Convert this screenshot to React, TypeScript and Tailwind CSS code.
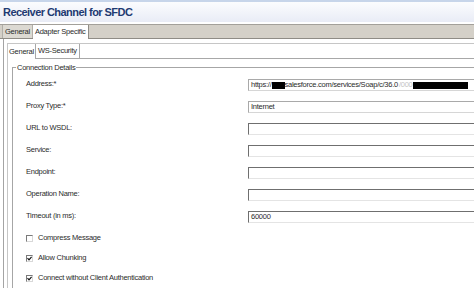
import React from "react";

const fields = [
  { label: "Address:*", kind: "address" },
  { label: "Proxy Type:*", kind: "value", value: "Internet" },
  { label: "URL to WSDL:", kind: "empty" },
  { label: "Service:", kind: "empty" },
  { label: "Endpoint:", kind: "empty" },
  { label: "Operation Name:", kind: "empty" },
  { label: "Timeout (in ms):", kind: "timeout", value: "60000" },
];

const checks = [
  { label: "Compress Message", on: false },
  { label: "Allow Chunking", on: true },
  { label: "Connect without Client Authentication", on: true },
];

function Input({ kind, value }: { kind: string; value?: string }) {
  const light = kind === "address" || kind === "value";
  return (
    <div
      className={
        "h-[12px] flex-1 flex items-center pl-[2px] border " +
        (light
          ? "border-[#a9a9a9] border-b-[#d6d6d6]"
          : "border-t-[#6f6f6f] border-l-[#6f6f6f] border-r-[#e4e4e4] border-b-[#e4e4e4]")
      }
    >
      {kind === "address" ? (
        <span className="flex items-center whitespace-nowrap">
          https://
          <span className="inline-block w-[13px] h-[7px] bg-black" />
          salesforce.com/services/Soap/c/36.0
          <span className="ml-[1px] text-[#c4c4c4]">/000</span>
          <span className="inline-block w-[55px] h-[7px] bg-black" />
        </span>
      ) : (
        <span className="whitespace-nowrap">{value}</span>
      )}
    </div>
  );
}

function CheckBox({ on }: { on: boolean }) {
  return (
    <span className="w-[7px] h-[7px] flex items-center justify-center bg-white border border-t-[#7a7a7a] border-l-[#7a7a7a] border-r-[#d8d8d8] border-b-[#d8d8d8]">
      {on && (
        <svg width="5" height="5" viewBox="0 0 5 5">
          <path d="M0.5 2.2 L2 3.8 L4.6 0.8" stroke="#111" strokeWidth="1.2" fill="none" />
        </svg>
      )}
    </span>
  );
}

export default function App() {
  return (
    <div className="w-[474px] h-[289px] overflow-hidden bg-white font-['Liberation_Sans',sans-serif] text-[#2b2b2b]">
      <div className="h-[22px] border-t-2 border-[#c7d5ea] bg-gradient-to-b from-[#fbfcfe] to-[#e9ecf6] flex items-center pl-[3px]">
        <span className="text-[11px] font-bold tracking-[-0.55px] text-[#1f3b72]">
          Receiver Channel for SFDC
        </span>
      </div>
      <div className="mt-[2px] h-[15px] bg-[#d4d0c8] border-y border-t-[#a3a09a] border-b-[#8f8c86] flex pl-[2px] text-[7.5px] tracking-[-0.25px]">
        <div className="px-[2px] flex items-center border-x border-[#b2afa8] bg-[#dcd9d2]">General</div>
        <div className="px-[2px] -mb-px flex items-center bg-white border-r border-[#8f8c86]">Adapter Specific</div>
      </div>
      <div className="border-l border-[#a4a4a4] ml-[3px] pt-[4px] w-[500px] text-[7.5px] tracking-[-0.25px]">
        <div className="ml-[3px] border-l border-t border-[#c6c6c6]">
          <div className="flex h-[15px]">
            <div className="flex items-center px-[1px] border-r border-[#a8a8a8]">General</div>
            <div className="px-[2px] flex items-center border-r border-b border-[#a8a8a8]">WS-Security</div>
            <div className="flex-1 border-b border-[#a8a8a8]" />
          </div>
          <div className="ml-[4px] mt-[8px] relative border-l border-t border-[#a6a6a6] pt-[6px] pl-[13px]">
            <span className="absolute -top-[5px] left-[3px] bg-white px-[1px] leading-[9px]">
              Connection Details
            </span>
            {fields.map((f) => (
              <div key={f.label} className="h-[22px] flex items-center">
                <span className="w-[222px] -mt-[3px]">{f.label}</span>
                <Input kind={f.kind} value={f.value} />
              </div>
            ))}
            {checks.map((c) => (
              <div key={c.label} className="h-[20px] flex items-center gap-[5px]">
                <CheckBox on={c.on} />
                <span>{c.label}</span>
              </div>
            ))}
          </div>
        </div>
      </div>
    </div>
  );
}
